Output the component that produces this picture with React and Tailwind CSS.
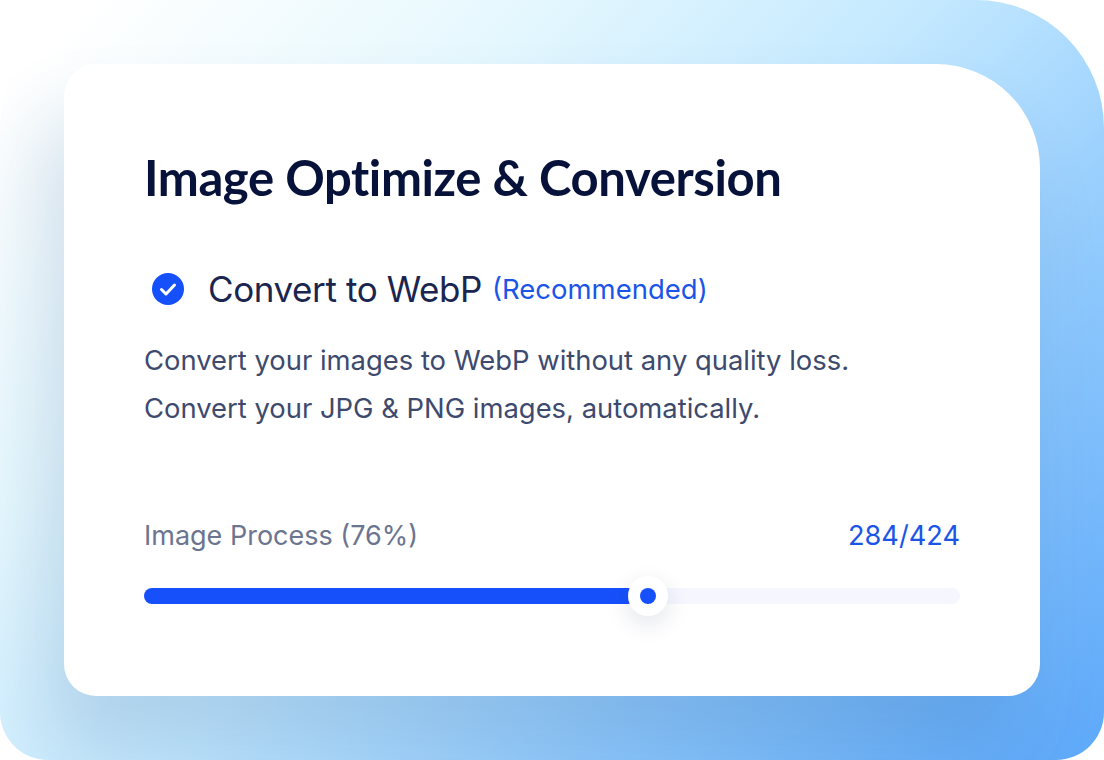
const App = () => {
  return (
    <div className="w-[1104px] h-[760px] bg-white overflow-hidden font-['Inter',sans-serif]">
      <div className="h-full p-16 rounded-tl-[128px] rounded-tr-[128px] rounded-b-[48px] overflow-hidden bg-[linear-gradient(135deg,#ffffff_5%,#e6f8fe_28%,#c4e9ff_50%,#8fc9fd_73%,#5ca8fa_100%)]">
        <div className="h-full bg-white rounded-tr-[104px] rounded-tl-[32px] rounded-b-[32px] px-20 pt-[83px] shadow-[-20px_56px_80px_rgba(20,70,130,0.16)]">
          <h1 className="font-['Lato',sans-serif] font-bold text-[49px] leading-[60px] tracking-[-0.4px] text-[#07123a]">
            Image Optimize &amp; Conversion
          </h1>
          <div className="flex items-center mt-[62px] h-10 pl-2">
            <svg width="32" height="32" viewBox="0 0 32 32" fill="none">
              <circle cx="16" cy="16" r="16" fill="#1650fa" />
              <path d="M9.5 16.5l4.5 4.5 8.5-9" stroke="#fff" strokeWidth="3" strokeLinecap="round" strokeLinejoin="round" />
            </svg>
            <span className="ml-[24px] text-[35px] leading-10 tracking-[-0.4px] text-[#1a2550]">Convert to WebP</span>
            <span className="ml-[10px] text-[27.5px] leading-10 text-[#1b55e8]">(Recommended)</span>
          </div>
          <p className="mt-[27px] text-[27.4px] leading-[48px] text-[#3d4a6e]">
            Convert your images to WebP without any quality loss.
            <br />
            Convert your JPG &amp; PNG images, automatically.
          </p>
          <div className="flex items-center justify-between mt-[84px] leading-10">
            <span className="text-[27px] text-[#6b7590]">Image Process (76%)</span>
            <span className="text-[27.2px] text-[#1b55e8]">284/424</span>
          </div>
          <div className="relative mt-[32px] h-4 rounded-full bg-[#f5f6fe]">
            <div className="h-full w-[504px] rounded-full bg-[#1650fa]" />
            <div className="absolute left-[484px] top-[-12px] w-10 h-10 rounded-full bg-white flex items-center justify-center shadow-[0_8px_24px_rgba(20,40,90,0.12)]">
              <div className="w-4 h-4 rounded-full bg-[#1650fa]" />
            </div>
          </div>
        </div>
      </div>
    </div>
  );
};

export default App;
